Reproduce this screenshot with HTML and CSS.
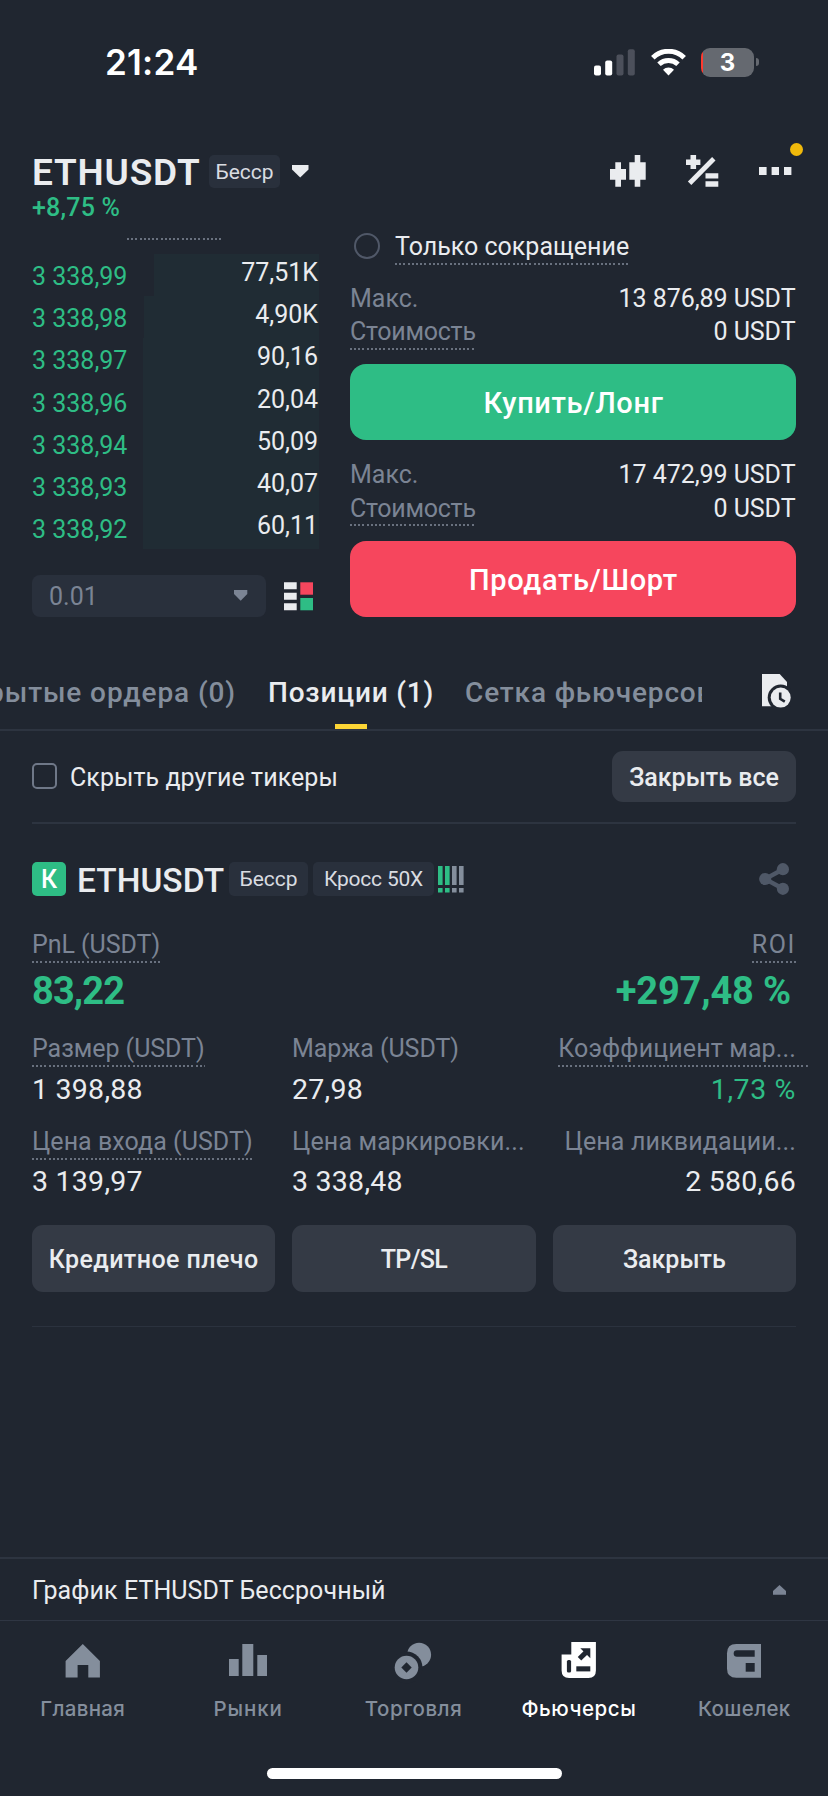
FILE: index.html
```html
<!DOCTYPE html>
<html lang="ru">
<head>
<meta charset="utf-8">
<title>ETHUSDT Бессрочный</title>
<link rel="stylesheet" href="styles.css">
</head>
<body>
<div class="status">
  <span class="time">21:24</span>
  <div class="indicators">
    <svg class="signal" width="42" height="27" viewBox="0 0 42 27">
      <rect x="0" y="16.4" width="7" height="10.2" rx="2" fill="#fff"/>
      <rect x="11.2" y="11.6" width="7" height="15" rx="2" fill="#fff"/>
      <rect x="22.5" y="5.6" width="7" height="21" rx="2" fill="#4c505b"/>
      <rect x="33.8" y="0.3" width="7" height="26.3" rx="2" fill="#4c505b"/>
    </svg>
    <svg class="wifi" width="35" height="27" viewBox="0 0 35 27">
      <path d="M1.8 8.7A22.4 22.4 0 0 1 33.2 8.7" fill="none" stroke="#fff" stroke-width="5"/>
      <path d="M8 15.2A13.8 13.8 0 0 1 27 15.2" fill="none" stroke="#fff" stroke-width="5"/>
      <path d="M12 20.8A8 8 0 0 1 23 20.8L17.5 26.5Z" fill="#fff"/>
    </svg>
    <div class="battery">3</div>
    <div class="battery-cap"></div>
  </div>
</div>

<header class="head">
  <h1 class="pair">ETHUSDT</h1>
  <span class="tag tag-head">Бесср</span>
  <svg class="caret" width="17" height="13" viewBox="0 0 17 13"><path d="M0 0H16.5V4.5L8.2 12.5L0 4.5Z" fill="#eaecef"/></svg>
  <div class="tools">
    <svg width="36" height="32" viewBox="0 0 36 32" fill="#eaecef"><path d="M5.3 7.3H11V14H16V24.7H11V31.7H5.3V24.7H0V14H5.3ZM24.7 0H30.3V7.3H35.7V24.7H30.3V31.7H24.7V24.7H19.3V7.3H24.7Z"/></svg>
    <svg width="33" height="32" viewBox="0 0 33 32" fill="#eaecef"><path d="M4.5 0H10.1V4.4H14.4V10H10.1V14H4.5V10H0V4.4H4.5ZM19.5 18.3H32.3V23.5H19.5ZM19.5 26.3H32.3V31.7H19.5Z"/><path d="M3.6 28.2L27.8 3.8" stroke="#eaecef" stroke-width="4.8"/></svg>
    <div class="more">
      <svg width="33" height="32" viewBox="0 0 33 32" fill="#eaecef"><path d="M0 12H7.6V20H0ZM12.6 12H20V20H12.6ZM25 12H32.4V20H25Z"/></svg>
      <i class="badge"></i>
    </div>
  </div>
</header>
<div class="change">+8,75 %</div>

<main class="trade">
  <section class="book">
    <div class="book-line"></div>
    <div class="rows">
      <div class="row"><span class="price">3 338,99</span><span class="amount" style="width:165.5px">77,51K</span></div>
      <div class="row"><span class="price">3 338,98</span><span class="amount" style="width:175px">4,90K</span></div>
      <div class="row"><span class="price">3 338,97</span><span class="amount" style="width:176px">90,16</span></div>
      <div class="row"><span class="price">3 338,96</span><span class="amount" style="width:176px">20,04</span></div>
      <div class="row"><span class="price">3 338,94</span><span class="amount" style="width:176px">50,09</span></div>
      <div class="row"><span class="price">3 338,93</span><span class="amount" style="width:176px">40,07</span></div>
      <div class="row"><span class="price">3 338,92</span><span class="amount" style="width:176px">60,11</span></div>
    </div>
    <div class="book-foot">
      <div class="select">0.01<svg width="14" height="11" viewBox="0 0 14 11"><path d="M0 0H13.3V4L6.7 10.7L0 4Z" fill="#7b8494"/></svg></div>
      <svg class="depth" width="29" height="29" viewBox="0 0 29 29"><path d="M0 .3H12.7V7.3H0ZM0 10.7H12.7V17.7H0ZM0 21.3H12.7V28.3H0Z" fill="#eaecef"/><path d="M16.3 .3H29V12.7H16.3Z" fill="#f6465d"/><path d="M16.3 16H29V28.3H16.3Z" fill="#2ebd85"/></svg>
    </div>
  </section>

  <section class="order">
    <div class="reduce"><i class="radio"></i><span class="dotted reduce-text">Только сокращение</span></div>
    <div class="info">
      <div class="info-row"><span>Макс.</span><b>13 876,89 USDT</b></div>
      <div class="info-row"><span class="dotted">Стоимость</span><b>0 USDT</b></div>
    </div>
    <button class="submit buy">Купить/Лонг</button>
    <div class="info info-sell">
      <div class="info-row"><span>Макс.</span><b>17 472,99 USDT</b></div>
      <div class="info-row"><span class="dotted">Стоимость</span><b>0 USDT</b></div>
    </div>
    <button class="submit sell">Продать/Шорт</button>
  </section>
</main>

<nav class="tabs">
  <div class="tab-list">
    <span class="tab tab-first">Открытые ордера (0)</span>
    <span class="tab active">Позиции (1)</span>
    <span class="tab">Сетка фьючерсов</span>
  </div>
  <svg class="history" width="29" height="34" viewBox="0 0 29 34"><path d="M0 0H17.7L25 8V32.3H0Z" fill="#eaecef"/><circle cx="18.7" cy="23.6" r="13" fill="#202630"/><circle cx="18.7" cy="23.6" r="10" fill="#eaecef"/><path d="M18.2 18.4V24.8L22.8 27.6" fill="none" stroke="#202630" stroke-width="2.6"/></svg>
</nav>

<section class="filter">
  <i class="check"></i><span class="filter-text">Скрыть другие тикеры</span>
  <button class="btn close-all">Закрыть все</button>
</section>

<section class="position">
  <div class="pos-head">
    <span class="side">К</span>
    <h2 class="pos-pair">ETHUSDT</h2>
    <span class="tag tag-perp">Бесср</span>
    <span class="tag tag-cross">Кросс 50X</span>
    <svg class="risk" width="26" height="27" viewBox="0 0 26 27"><path d="M0 0H4.6V19H0ZM0 22H4.6V26.5H0ZM7 0H11.6V19H7ZM7 22H11.6V26.5H7Z" fill="#2ebd85"/><path d="M14 0H18.6V19H14ZM14 22H18.6V26.5H14ZM21 0H25.6V19H21ZM21 22H25.6V26.5H21Z" fill="#848e9c"/></svg>
    <svg class="share" width="30" height="32" viewBox="0 0 30 32"><path d="M24 6.2L6 16L24 25.8" fill="none" stroke="#4f5867" stroke-width="4.4"/><g fill="#4f5867"><circle cx="6.2" cy="16" r="6.1"/><circle cx="23.9" cy="6.2" r="6.1"/><circle cx="23.9" cy="25.8" r="6.1"/></g></svg>
  </div>
  <div class="pnl">
    <div><span class="label dotted pnl-label">PnL (USDT)</span><strong class="big big-pnl">83,22</strong></div>
    <div class="right"><span class="label dotted roi">ROI</span><strong class="big big-roi">+297,48 %</strong></div>
  </div>
  <div class="stats">
    <div class="stat"><span class="label dotted">Размер (USDT)</span><span class="value">1 398,88</span></div>
    <div class="stat"><span class="label">Маржа (USDT)</span><span class="value">27,98</span></div>
    <div class="stat right"><span class="label dotted ratio">Коэффициент мар...</span><span class="value green">1,73 %</span></div>
    <div class="stat"><span class="label dotted entry">Цена входа (USDT)</span><span class="value">3 139,97</span></div>
    <div class="stat"><span class="label wide">Цена маркировки...</span><span class="value">3 338,48</span></div>
    <div class="stat right"><span class="label wide">Цена ликвидации...</span><span class="value">2 580,66</span></div>
  </div>
  <div class="actions">
    <button class="btn leverage">Кредитное плечо</button>
    <button class="btn tpsl">TP/SL</button>
    <button class="btn">Закрыть</button>
  </div>
</section>

<footer class="footer">
  <div class="chart-bar"><span>График ETHUSDT Бессрочный</span><svg width="13" height="10" viewBox="0 0 13 10"><path d="M6.5 0L13 6V9.7H0V6Z" fill="#7b8494"/></svg></div>
  <nav class="nav">
    <a class="nav-item"><svg width="48" height="48" viewBox="-6.6 -7 48 48"><path d="M17.2 0L34.3 17V33.6H22.7V21H12V33.6H0V17Z"/></svg>Главная</a>
    <a class="nav-item rynki"><svg width="48" height="48" viewBox="-5 -7 48 48"><path d="M0 15H9.7V32H0ZM13.3 0H24.3V32H13.3ZM28.3 11H38V32H28.3Z"/></svg>Рынки</a>
    <a class="nav-item torg"><svg width="48" height="48" viewBox="-5.8 -5.8 48 48"><circle cx="24.3" cy="12" r="12"/><circle cx="11.7" cy="24.7" r="16" fill="#202630"/><circle cx="11.7" cy="24.7" r="11.8"/><path d="M11.7 19.5L16.9 24.7L11.7 29.9L6.5 24.7Z" fill="#202630"/></svg>Торговля</a>
    <a class="nav-item current torg"><svg width="48" height="48" viewBox="-6.6 -5 48 48"><path d="M9.7 0H34.3V28.5Q34.3 36 26.8 36H7.5Q0 36 0 28.5V12.5H9.7Z"/><g fill="#202630"><rect x="5.3" y="18" width="4.2" height="12.6" rx="1.6"/><path d="M14.7 24.3H28.7V29.4H14.7Z"/><path d="M18.7 6.3H28.7V16.2Z"/></g><path d="M17.9 16.7L25.2 9.6" stroke="#202630" stroke-width="5"/></svg>Фьючерсы</a>
    <a class="nav-item"><svg width="48" height="48" viewBox="-7 -7 48 48"><path d="M9.3 0H34V33.8H9.3Q0 33.8 0 24.5V9.3Q0 0 9.3 0Z"/><g fill="#202630"><path d="M9.9 6.3H27.7V12.7H9.9A3.2 3.2 0 0 1 9.9 6.3Z"/><path d="M18.7 19H27.7V27.7H18.7Z"/></g></svg>Кошелек</a>
  </nav>
  <div class="home-indicator"></div>
</footer>
</body>
</html>
```
FILE: styles.css
```css
* { box-sizing: border-box; }

body {
  margin: 0;
  width: 828px;
  height: 1796px;
  display: flex;
  flex-direction: column;
  overflow: hidden;
  background: #202630;
  color: #eaecef;
  font: 400 25px/34px Roboto, sans-serif;
  white-space: nowrap;
}

svg { display: block; flex: none; }
button { border: 0; padding: 0; font: inherit; color: inherit; white-space: nowrap; }

.dotted {
  padding-bottom: 2px;
  background: repeating-linear-gradient(90deg, #69717f 0 2px, transparent 2px 4.2px) bottom / 100% 2px no-repeat;
}

/* Status bar */
.status {
  height: 124px;
  padding: 0 69px 0 105px;
  display: flex;
  align-items: center;
  justify-content: space-between;
}
.time { font: 600 35px/40px Inter, sans-serif; letter-spacing: 0.24px; color: #fff; }
.indicators { display: flex; align-items: center; }
.wifi { margin-left: 15px; }
.battery {
  width: 53px;
  height: 29px;
  margin-left: 15px;
  border-radius: 9px;
  background: linear-gradient(90deg, #ff3b30 2px, #656970 2px);
  color: #fff;
  font: 700 24px/29px Inter, sans-serif;
  text-align: center;
}
.battery-cap { width: 3px; height: 8px; margin-left: 2px; border-radius: 0 4px 4px 0; background: #656970; }

/* Header */
.head {
  height: 46px;
  margin-top: 25px;
  padding: 0 36px 0 32px;
  display: flex;
  align-items: center;
}
.pair { margin: 0; width: 177px; font-size: 37px; font-weight: 600; letter-spacing: 0.8px; line-height: 44px; padding-top: 2px; }
.tag {
  height: 33px;
  border-radius: 5px;
  background: #29303c;
  color: #d9dce1;
  font-size: 21px;
  line-height: 35px;
  text-align: center;
}
.tag-head { width: 71px; margin-top: -2px; }
.caret { margin: -2px 0 0 12px; }
.tools { margin: -2px 0 0 auto; display: flex; gap: 40px; }
.more { position: relative; }
.badge { position: absolute; left: 31px; top: -12px; width: 13px; height: 13px; border-radius: 50%; background: #f0b90b; }
.change { height: 24px; padding-left: 32px; line-height: 26px; font-weight: 500; color: #2ebd85; letter-spacing: 0.2px; }

/* Order book and order form */
.trade { height: 398px; padding: 0 32px; display: grid; grid-template-columns: 287px 446px; gap: 31px; }
.book { padding-top: 19px; }
.book-line {
  width: 96px;
  height: 2px;
  margin-left: 95px;
  background: repeating-linear-gradient(90deg, #69717f 0 2px, transparent 2px 4.2px);
}
.rows { margin-top: 14px; }
.row { height: 42.2px; display: flex; justify-content: space-between; }
.price { line-height: 46px; color: #2ebd85; }
.amount { line-height: 38px; padding-right: 1px; text-align: right; background: #202c34; }
.book-foot { margin-top: 25.6px; display: flex; }
.select {
  width: 234px;
  height: 42px;
  padding: 2px 18px 0 17px;
  display: flex;
  align-items: center;
  justify-content: space-between;
  border-radius: 8px;
  background: #29303c;
  color: #7b8494;
}
.select svg { margin-top: -2px; }
.depth { margin: 7px 0 0 18px; }

.order { padding-top: 10px; }
.reduce { height: 36px; display: flex; }
.reduce-text { height: 36px; margin-left: 15px; line-height: 36px; color: #eaecef; }
.radio { width: 26px; height: 26px; margin: 4px 0 0 4px; border: 2px solid #505868; border-radius: 50%; }
.info { margin-top: 15.7px; height: 69px; }
.info-sell { margin-top: 17.3px; }
.info-row { height: 33.7px; display: flex; justify-content: space-between; line-height: 35px; color: #7b8494; }
.info-row .dotted { height: 35.3px; letter-spacing: -0.25px; }
.info-row b { font-weight: 400; color: #eaecef; letter-spacing: -0.06px; padding-right: 0.5px; }
.submit {
  display: block;
  width: 446px;
  height: 76px;
  margin-top: 14.3px;
  border-radius: 16px;
  color: #fff;
  font-size: 29px;
  font-weight: 500;
  line-height: 76px;
  letter-spacing: 0.64px;
  padding: 1px 0 0 1px;
}
.buy { background: #2ebd85; }
.sell { background: #f6465d; }

/* Tabs */
.tabs { height: 114px; padding-top: 37px; display: flex; border-bottom: 2px solid #2d3440; }
.tab-list { width: 702px; display: flex; overflow: hidden; font-size: 28px; font-weight: 500; line-height: 77px; color: #848e9c; }
.tab { flex: none; letter-spacing: 0.85px; }
.tab-first { width: 236px; display: flex; justify-content: flex-end; letter-spacing: 0.9px; }
.active { position: relative; width: 167px; margin: 0 30px 0 32px; color: #eaecef; letter-spacing: 0.8px; }
.active::after { content: ""; position: absolute; left: 67px; bottom: -1px; width: 32px; height: 6px; background: #fcd535; }
.history { margin: 20px 0 0 60px; }

/* Filter */
.filter { height: 93px; margin: 0 32px; display: flex; align-items: center; border-bottom: 2px solid #2d3440; }
.check { width: 25px; height: 26px; margin-top: -1px; border: 2px solid #6f7888; border-radius: 5px; }
.filter-text { margin-left: 13px; letter-spacing: 0.06px; padding-top: 2px; }
.btn { border-radius: 11px; background: #343a45; font-weight: 500; }
.close-all { width: 184px; height: 51px; margin-left: auto; padding-top: 2px; }

/* Position card */
.position { margin: 38px 32px 0; border-bottom: 1px solid #2b323e; height: 465px; }
.pos-head { height: 34px; display: flex; align-items: center; }
.side { width: 34px; height: 34px; border-radius: 5px; background: #2ebd85; color: #fff; font-size: 25px; font-weight: 500; line-height: 35px; text-align: center; }
.pos-pair { margin: 4px 0 0 11px; width: 152px; font-size: 33.5px; font-weight: 500; letter-spacing: 0; line-height: 34px; }
.tag-perp { width: 79px; height: 34px; }
.tag-cross { width: 121px; height: 34px; margin-left: 5px; letter-spacing: -0.2px; }
.risk { margin-left: 4px; }
.share { margin: 0 7px 0 auto; }
.pnl { margin-top: 32px; display: flex; justify-content: space-between; }
.pnl > div { display: flex; flex-direction: column; align-items: flex-start; }
.pnl > .right, .stats > .right { align-items: flex-end; }
.label { flex: none; height: 35px; line-height: 33.5px; color: #7b8494; }
.pnl-label { letter-spacing: -0.05px; }
.roi { letter-spacing: 1.6px; }
.big { margin-top: 5px; font-size: 38px; font-weight: 700; line-height: 46px; height: 44px; color: #2ebd85; }
.big-pnl { letter-spacing: -0.9px; }
.big-roi { margin-right: 5px; letter-spacing: -0.15px; }
.stats { margin-top: 20px; display: grid; grid-template-columns: 260px 260px 1fr; row-gap: 18px; }
.stat { height: 74.5px; display: flex; flex-direction: column; align-items: flex-start; }
.stat .label { letter-spacing: -0.05px; }
.stat .entry { letter-spacing: 0.05px; }
.stat .wide, .stat .ratio { letter-spacing: 0.14px; }
.value { flex: none; height: 36px; margin-top: 3.5px; font-size: 28.5px; line-height: 38px; letter-spacing: 0.25px; }
.value.green { color: #2ebd85; letter-spacing: 0.6px; }
.ratio { padding-right: 12px; margin-right: -12px; }
.actions { margin-top: 26px; display: grid; grid-template-columns: repeat(3, 1fr); gap: 17px; }
.actions .btn { height: 67px; border-radius: 11px; padding-top: 2px; }
.leverage { letter-spacing: 0.44px; }
.tpsl { letter-spacing: -0.6px; }

/* Footer */
.footer { height: 239px; margin-top: auto; }
.chart-bar {
  height: 63px;
  padding: 2px 42px 0 32px;
  display: flex;
  align-items: center;
  justify-content: space-between;
  border-top: 2px solid #2d3440;
  letter-spacing: 0.08px;
}
.chart-bar svg { margin-top: -2px; }
.nav { height: 148px; padding: 16px 1px 0 0; display: grid; grid-template-columns: repeat(5, 1fr); border-top: 1px solid #2f3643; }
.nav-item {
  display: flex;
  flex-direction: column;
  align-items: center;
  gap: 9px;
  color: #848e9c;
  fill: #848e9c;
  font: 500 20.5px/30px Inter, sans-serif;
  letter-spacing: 0.33px;
}
.rynki { letter-spacing: 0.85px; }
.torg { letter-spacing: 0.55px; }
.current { color: #fff; fill: #fff; }
.home-indicator { width: 295px; height: 11px; margin: 0 auto; border-radius: 6px; background: #fff; }
```
